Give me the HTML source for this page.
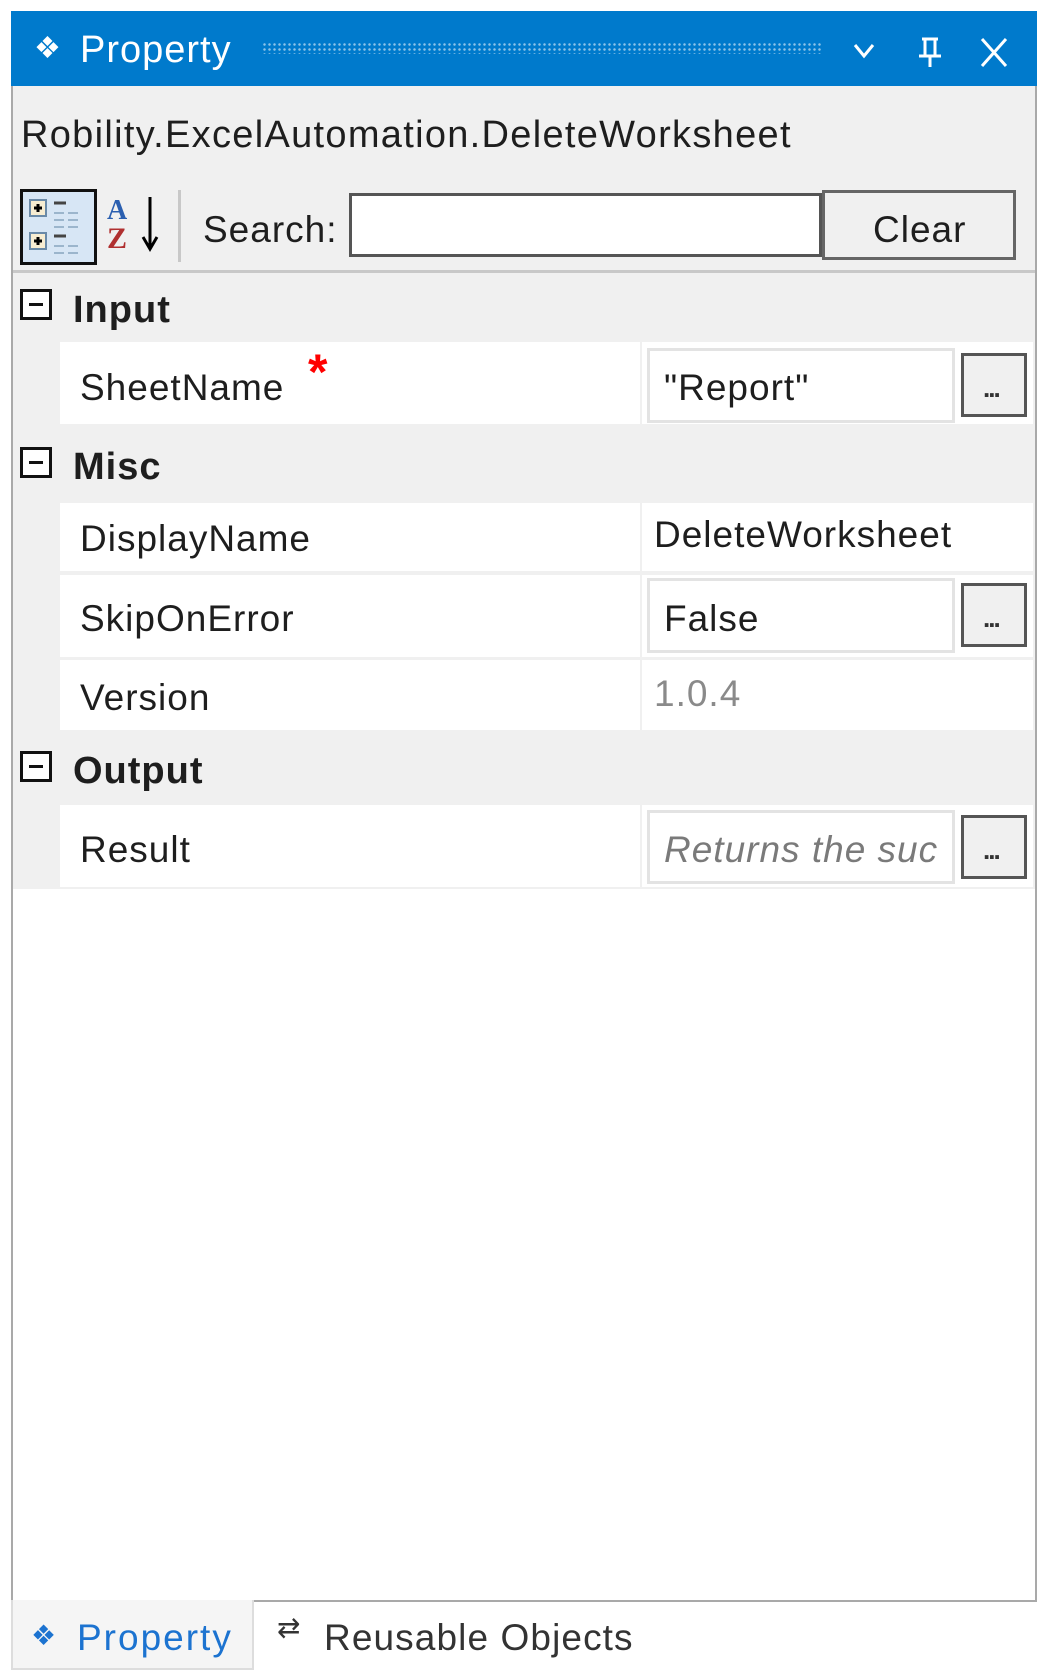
<!DOCTYPE html>
<html><head><meta charset="utf-8"><style>
*{margin:0;padding:0;box-sizing:border-box}
body{width:1042px;height:1678px;background:#fff;position:relative;overflow:hidden;font-family:"Liberation Sans",sans-serif;color:#1e1e1e}
.a{position:absolute}
.t{position:absolute;white-space:nowrap;line-height:1;letter-spacing:1px}
.exp{position:absolute;left:20px;width:32px;height:31px;border:3px solid #111;background:#fff}
.exp:after{content:"";position:absolute;left:6px;top:11px;width:14px;height:3px;background:#111}
.row{position:absolute;left:60px;width:973px;background:#fff;border-bottom:2px solid #f0f0f0}
.vb{position:absolute;left:647px;width:308px;background:#fff;border:3px solid #e3e3e3}
.btn{position:absolute;left:961px;width:66px;height:64px;border:3px solid #555;background:#f0f0f0}
.btn span{position:absolute;left:19px;bottom:10px;font-size:26px;font-weight:bold;letter-spacing:-2px;color:#333}
</style></head><body>
<div class="a" style="left:11px;top:11px;width:1026px;height:1591px;border:2px solid #a9a9a9;background:#fff"></div>
<div class="a" style="left:13px;top:86px;width:1022px;height:184px;background:#f0f0f0"></div>
<div class="a" style="left:13px;top:270px;width:1022px;height:3px;background:#c8c8c8"></div>
<div class="a" style="left:13px;top:273px;width:1022px;height:616px;background:#f0f0f0"></div>
<div class="a" style="left:11px;top:11px;width:1026px;height:75px;background:#007acc"></div>
<div class="t" style="left:34px;top:34px;color:#fff;font-size:30px">&#10070;</div>
<div class="t" style="left:80px;top:31px;color:#fff;font-size:38px">Property</div>
<div class="a" style="left:262px;top:42px;width:560px;height:12px;background-image:radial-gradient(circle,rgba(255,255,255,.55) 1px,transparent 1.5px);background-size:5px 5px"></div>
<svg class="a" style="left:850px;top:36px" width="190" height="34" viewBox="0 0 190 34" fill="none" stroke="#fff" stroke-width="3">
<path d="M5 9 L14 20 L23 9"/>
<path d="M75 3 V20 M85 3 V20 M72 3 H88 M69 20 H91 M80 20 V31"/>
<path d="M132 3 L156 30 M156 3 L132 30"/>
</svg>
<div class="t" style="left:21px;top:116px;font-size:38px;letter-spacing:1.3px">Robility.ExcelAutomation.DeleteWorksheet</div>
<div class="a" style="left:20px;top:189px;width:77px;height:76px;border:3px solid #111;background:#d7e6f5"></div>
<svg class="a" style="left:24px;top:193px" width="70" height="68" viewBox="0 0 70 68">
<rect x="6" y="7" width="16" height="16" fill="#f7edd2" stroke="#6a8aa8" stroke-width="2"/><path d="M10 15h8M14 11v8" stroke="#000" stroke-width="3"/>
<rect x="6" y="40" width="16" height="16" fill="#f7edd2" stroke="#6a8aa8" stroke-width="2"/><path d="M10 48h8M14 44v8" stroke="#000" stroke-width="3"/>
<path d="M30 10h12M30 43h12" stroke="#444" stroke-width="3"/>
<path d="M30 20h10M44 20h10M30 27h10M44 27h10M30 34h10M44 34h10M30 53h10M44 53h10M30 60h10M44 60h10" stroke="#9bb5cc" stroke-width="2"/>
</svg>
<div class="t" style="left:107px;top:197px;font-size:28px;font-weight:bold;color:#2b5fb0;font-family:'Liberation Serif',serif">A</div>
<div class="t" style="left:107px;top:224px;font-size:30px;font-weight:bold;color:#b03030;font-family:'Liberation Serif',serif">Z</div>
<svg class="a" style="left:140px;top:197px" width="20" height="56"><path d="M10 0V50M3 40l7 12 7-12" stroke="#000" stroke-width="3" fill="none"/></svg>
<div class="a" style="left:178px;top:190px;width:3px;height:72px;background:#c8c8c8"></div>
<div class="t" style="left:203px;top:211px;font-size:37px">Search:</div>
<div class="a" style="left:349px;top:193px;width:473px;height:64px;border:3px solid #555;background:#fff"></div>
<div class="a" style="left:822px;top:190px;width:194px;height:70px;border:3px solid #666;background:#f0f0f0"></div>
<div class="t" style="left:873px;top:211px;font-size:37px">Clear</div>
<div class="exp" style="top:289px"></div>
<div class="t" style="left:73px;top:291px;font-size:38px;font-weight:bold">Input</div>
<div class="row" style="top:342px;height:84px"></div>
<div class="t" style="left:80px;top:369px;font-size:37px">SheetName</div>
<div class="t" style="left:308px;top:347px;font-size:50px;color:#f00;font-weight:bold">*</div>
<div class="a" style="left:640px;top:342px;width:2px;height:84px;background:#f0f0f0"></div>
<div class="vb" style="top:348px;height:75px"></div>
<div class="t" style="left:664px;top:369px;font-size:37px">"Report"</div>
<div class="btn" style="top:353px"><span>...</span></div>
<div class="exp" style="top:447px"></div>
<div class="t" style="left:73px;top:448px;font-size:38px;font-weight:bold">Misc</div>
<div class="row" style="top:503px;height:70px"></div>
<div class="t" style="left:80px;top:520px;font-size:37px">DisplayName</div>
<div class="t" style="left:654px;top:516px;font-size:37px">DeleteWorksheet</div>
<div class="row" style="top:575px;height:84px"></div>
<div class="t" style="left:80px;top:600px;font-size:37px">SkipOnError</div>
<div class="vb" style="top:578px;height:75px"></div>
<div class="t" style="left:664px;top:600px;font-size:37px">False</div>
<div class="btn" style="top:583px"><span>...</span></div>
<div class="row" style="top:660px;height:72px"></div>
<div class="t" style="left:80px;top:679px;font-size:37px">Version</div>
<div class="t" style="left:654px;top:675px;font-size:37px;color:#8a8a8a">1.0.4</div>
<div class="a" style="left:640px;top:503px;width:2px;height:229px;background:#f0f0f0"></div>
<div class="exp" style="top:751px"></div>
<div class="t" style="left:73px;top:752px;font-size:38px;font-weight:bold">Output</div>
<div class="row" style="top:805px;height:84px"></div>
<div class="t" style="left:80px;top:831px;font-size:37px">Result</div>
<div class="a" style="left:640px;top:805px;width:2px;height:84px;background:#f0f0f0"></div>
<div class="vb" style="top:810px;height:74px;overflow:hidden"><div class="t" style="left:14px;top:18px;font-size:37px;font-style:italic;color:#7a7a7a">Returns the suc</div></div>
<div class="btn" style="top:815px"><span>...</span></div>
<div class="a" style="left:11px;top:1600px;width:243px;height:70px;background:#f5f5f5;border:2px solid #ddd;border-top:none"></div>
<div class="t" style="left:31px;top:1622px;font-size:28px;color:#1c73d0">&#10070;</div>
<div class="t" style="left:77px;top:1619px;font-size:37px;color:#1c73d0;letter-spacing:2px">Property</div>
<div class="t" style="left:277px;top:1614px;font-size:28px;color:#333">&#8644;</div>
<div class="t" style="left:324px;top:1619px;font-size:37px;color:#333;letter-spacing:1.1px">Reusable Objects</div>
</body></html>
